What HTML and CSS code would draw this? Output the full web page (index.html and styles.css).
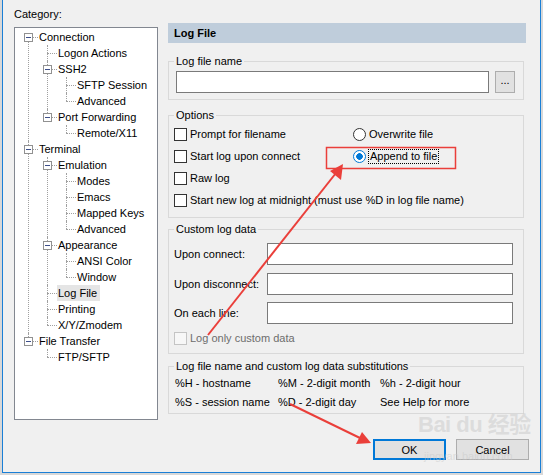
FILE: index.html
```html
<!DOCTYPE html>
<html lang="en">
<head>
  <meta charset="UTF-8" />
  <title>Session Options - Log File</title>
  <link rel="stylesheet" href="styles.css">
</head>
<body>
  <div class="dialog">
    <div class="main">
      <div class="side">
        <div class="side-title">Category:</div>
        <div class="tree-box">
          <ul class="tree">
            <li><span class="exp"></span><span class="label">Connection</span>
              <ul>
                <li><span class="label">Logon Actions</span></li>
                <li><span class="exp"></span><span class="label">SSH2</span>
                  <ul>
                    <li><span class="label">SFTP Session</span></li>
                    <li><span class="label">Advanced</span></li>
                  </ul>
                </li>
                <li><span class="exp"></span><span class="label">Port Forwarding</span>
                  <ul>
                    <li><span class="label">Remote/X11</span></li>
                  </ul>
                </li>
              </ul>
            </li>
            <li><span class="exp"></span><span class="label">Terminal</span>
              <ul>
                <li><span class="exp"></span><span class="label">Emulation</span>
                  <ul>
                    <li><span class="label">Modes</span></li>
                    <li><span class="label">Emacs</span></li>
                    <li><span class="label">Mapped Keys</span></li>
                    <li><span class="label">Advanced</span></li>
                  </ul>
                </li>
                <li><span class="exp"></span><span class="label">Appearance</span>
                  <ul>
                    <li><span class="label">ANSI Color</span></li>
                    <li><span class="label">Window</span></li>
                  </ul>
                </li>
                <li><span class="label selected">Log File</span></li>
                <li><span class="label">Printing</span></li>
                <li><span class="label">X/Y/Zmodem</span></li>
              </ul>
            </li>
            <li><span class="exp"></span><span class="label">File Transfer</span>
              <ul>
                <li><span class="label">FTP/SFTP</span></li>
              </ul>
            </li>
          </ul>
        </div>
      </div>

      <div class="panel">
        <div class="panel-title">Log File</div>

        <fieldset class="group">
          <legend>Log file name</legend>
          <div class="file-row">
            <input type="text" class="file-input">
            <button class="browse">...</button>
          </div>
        </fieldset>

        <fieldset class="group group-options">
          <legend>Options</legend>
          <div class="options">
            <label class="check"><input type="checkbox"> Prompt for filename</label>
            <label class="check"><input type="radio" name="mode"> Overwrite file</label>
            <label class="check"><input type="checkbox"> Start log upon connect</label>
            <label class="check"><input type="radio" name="mode" checked> <span class="focus">Append to file</span></label>
            <label class="check wide"><input type="checkbox"> Raw log</label>
            <label class="check wide"><input type="checkbox"> Start new log at midnight (must use %D in log file name)</label>
          </div>
        </fieldset>

        <fieldset class="group group-custom">
          <legend>Custom log data</legend>
          <div class="custom">
            <span>Upon connect:</span><input type="text">
            <span>Upon disconnect:</span><input type="text">
            <span>On each line:</span><input type="text">
          </div>
          <label class="check disabled"><input type="checkbox" disabled> Log only custom data</label>
        </fieldset>

        <fieldset class="group group-subst">
          <legend>Log file name and custom log data substitutions</legend>
          <div class="subst">
            <span>%H - hostname</span>
            <span>%M - 2-digit month</span>
            <span>%h - 2-digit hour</span>
            <span>%S - session name</span>
            <span>%D - 2-digit day</span>
            <span>See Help for more</span>
          </div>
        </fieldset>
      </div>
    </div>

    <div class="buttons">
      <button class="btn btn-default">OK</button>
      <button class="btn">Cancel</button>
    </div>
  </div>

  <div class="watermark">
    <div class="wm-big">Bai du 经验</div>
    <div class="wm-small">jingyan.baidu.com</div>
  </div>

  <!-- red annotations drawn on top of the screenshot -->
  <svg class="marks" width="543" height="475" viewBox="0 0 543 475">
    <rect x="326.5" y="147.5" width="129" height="21" fill="none" stroke="#ea3f3a" stroke-width="1.5"/>
    <line x1="208" y1="335" x2="336" y2="173" stroke="#ea3f3a" stroke-width="2"/>
    <polygon points="343,164 341,180 330,171" fill="#ea3f3a"/>
    <line x1="290" y1="404" x2="360" y2="438" stroke="#ea3f3a" stroke-width="2"/>
    <polygon points="371,443 356,444 362,432" fill="#ea3f3a"/>
  </svg>
</body>
</html>
```

FILE: styles.css
```css
* {
  box-sizing: border-box;
}

body {
  margin: 0;
  height: 475px;
  overflow: hidden;
  background: #d8d8d8;
  font-family: "Liberation Sans", Arial, sans-serif;
  font-size: 11px;
  color: #000;
}

.dialog {
  margin-left: 2px;
  width: 539px;
  height: 473px;
  background: #f0f0f0;
  border: 1px solid #1a7fd6;
  border-top: none;
}

.main {
  display: flex;
  gap: 10px;
  padding: 6px 0 0 11px;
}

/* left: category tree */
.side-title {
  height: 16px;
  line-height: 16px;
}

.tree-box {
  margin-top: 5px;
  width: 144px;
  height: 393px;
  padding-top: 1px;
  background: #fff;
  border: 1px solid #828790;
}

.tree,
.tree ul {
  list-style: none;
  margin: 0;
  padding: 0;
}

.tree ul {
  padding-left: 19px;
}

.tree li {
  position: relative;
}

.tree li::before {
  content: "";
  position: absolute;
  left: 13px;
  top: 8px;
  width: 10px;
  border-top: 1px dotted #a0a0a0;
}

.tree li::after {
  content: "";
  position: absolute;
  left: 13px;
  top: 0;
  bottom: 0;
  border-left: 1px dotted #a0a0a0;
}

.tree li:last-child::after {
  bottom: auto;
  height: 8px;
}

.tree > li:first-child::after {
  top: 8px;
  bottom: 0;
  height: auto;
}

.exp {
  position: absolute;
  left: 9px;
  top: 4px;
  width: 9px;
  height: 9px;
  border: 1px solid #919191;
  background: #fff;
  z-index: 1;
}

.exp::after {
  content: "";
  position: absolute;
  left: 1px;
  top: 3px;
  width: 5px;
  height: 1px;
  background: #3d4f8a;
}

.label {
  display: inline-block;
  height: 16px;
  line-height: 16px;
  margin-left: 23px;
  padding: 0 3px 0 1px;
  white-space: nowrap;
}

.label.selected {
  background: #e5e5e5;
}

/* right: options panel */
.panel {
  width: 358px;
  padding-top: 17px;
}

.panel-title {
  height: 20px;
  line-height: 20px;
  padding-left: 6px;
  background: #bfcddb;
  font-weight: bold;
}

.group {
  margin: 8px 2px 0 0;
  padding: 0 5px 6px;
  min-width: 0;
  border: 1px solid #d9d9d9;
}

.group legend {
  padding: 0 2px;
  line-height: 14px;
}

.group:first-of-type {
  margin-top: 11px;
  padding-top: 3px;
}

.file-row {
  display: flex;
  gap: 6px;
  padding-left: 2px;
}

input[type="text"] {
  height: 22px;
  margin: 0;
  padding: 0 3px;
  border: 1px solid #7a7a7a;
  background: #fff;
  font: inherit;
}

.file-input {
  width: 313px;
}

.browse {
  width: 20px;
  height: 22px;
  padding: 0 0 4px;
  border: 1px solid #adadad;
  background: #e1e1e1;
  font: inherit;
  color: #000;
}

.group-options {
  padding-top: 1px;
}

.options {
  display: grid;
  grid-template-columns: 179px 1fr;
  grid-auto-rows: 22px;
}

.check {
  display: flex;
  align-items: center;
  gap: 3px;
  white-space: nowrap;
}

.check.wide {
  grid-column: 1 / 3;
}

.check input {
  appearance: none;
  margin: 0;
  width: 13px;
  height: 13px;
  flex: none;
  border: 1px solid #333;
  background: #fff;
}

.check input[type="radio"] {
  border-radius: 50%;
}

.check input[type="radio"]:checked {
  border-color: #0078d7;
  background: radial-gradient(circle, #0078d7 3px, #fff 3.6px);
}

.focus {
  outline: 1px dotted #000;
  padding: 0 1px;
  line-height: 13px;
}

.group-custom {
  margin-top: 4px;
  padding-top: 7px;
  padding-bottom: 7px;
}

.custom {
  display: grid;
  grid-template-columns: 93px 246px;
  grid-auto-rows: 22px;
  row-gap: 7.5px;
  align-items: center;
}

.custom input {
  width: 246px;
}

.check.disabled {
  margin-top: 6px;
  height: 16px;
  color: #6d6d6d;
}

.check.disabled input {
  border-color: #c4c4c4;
  background: #f7f7f7;
}

.group-subst {
  margin-top: 5px;
  padding-bottom: 2px;
}

.subst {
  display: grid;
  grid-template-columns: 103px 102px 1fr;
  grid-auto-rows: 19px;
  align-items: center;
  padding-left: 1px;
}

.buttons {
  display: flex;
  justify-content: flex-end;
  gap: 10px;
  margin-top: 19px;
  padding-right: 11px;
}

.btn {
  width: 73px;
  height: 21px;
  padding: 0;
  border: 1px solid #adadad;
  background: #e1e1e1;
  font: inherit;
  color: #000;
}

.btn-default {
  border-color: #0078d7;
  box-shadow: inset 0 0 0 1px #0078d7;
}

.watermark {
  position: absolute;
  left: 418px;
  top: 412px;
  color: rgba(200, 200, 200, 0.5);
  pointer-events: none;
}

.wm-big {
  font-size: 22px;
  font-weight: bold;
  font-family: "Liberation Sans", "Noto Sans CJK SC", sans-serif;
  line-height: 26px;
  letter-spacing: -0.5px;
}

.wm-small {
  font-size: 11px;
  line-height: 12px;
  padding: 12px 0 0 6px;
}

.marks {
  position: absolute;
  left: 0;
  top: 0;
  pointer-events: none;
}
```
